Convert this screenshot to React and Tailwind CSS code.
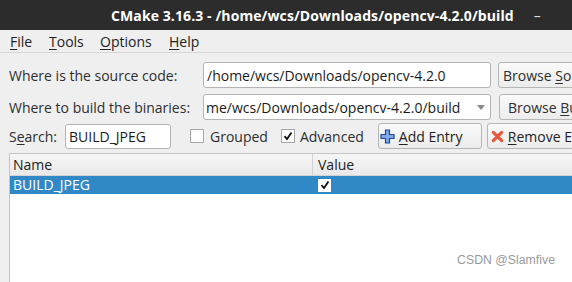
import React from "react";

function Checkbox({ checked }) {
  return (
    <span className="inline-flex h-[14px] w-[14px] items-center justify-center border border-[#a8a8a8] bg-white">
      {checked && (
        <svg width="10" height="10" viewBox="0 0 10 10">
          <path d="M1.5 5.2 L4 8 L8.5 1.5" fill="none" stroke="#111" strokeWidth="1.8" />
        </svg>
      )}
    </span>
  );
}

function PlusIcon() {
  return (
    <svg width="15" height="15" viewBox="0 0 15 15">
      <path
        d="M5.5 1 H9.5 V5.5 H14 V9.5 H9.5 V14 H5.5 V9.5 H1 V5.5 H5.5 Z"
        fill="#7fa9e8"
        stroke="#23479a"
        strokeWidth="1.2"
      />
    </svg>
  );
}

function RemoveIcon() {
  return (
    <svg width="13" height="13" viewBox="0 0 14 14">
      <path d="M2.5 2.5 L11.5 11.5 M11.5 2.5 L2.5 11.5" stroke="#e9573d" strokeWidth="3.4" strokeLinecap="round" />
    </svg>
  );
}

function Button({ children, className = "" }) {
  return (
    <div
      className={`flex h-[26px] shrink-0 items-center gap-[4px] rounded-[3px] border border-[#b5b5b5] bg-gradient-to-b from-[#fafafa] to-[#ececec] ${className}`}
    >
      {children}
    </div>
  );
}

function U({ children }) {
  return <span className="underline underline-offset-2">{children}</span>;
}

export default function App() {
  return (
    <div
      className="h-[282px] w-[572px] overflow-hidden bg-[#efefef] text-[14px] text-[#2e2e2e]"
      style={{ fontFamily: '"Open Sans", "Noto Sans", sans-serif' }}
    >
      {/* title bar */}
      <div className="flex h-[30px] items-center bg-[#2c2c2c] text-white">
        <div className="w-[111px] shrink-0" />
        <div className="whitespace-nowrap text-[14px] font-bold tracking-[0.1px]">
          CMake 3.16.3 - /home/wcs/Downloads/opencv-4.2.0/build
        </div>
        <div className="ml-[20px] text-[#dcdcdc]">–</div>
      </div>

      {/* menu bar */}
      <div className="flex h-[23px] items-center border-b border-[#d6d6d6] pl-[10px] text-[#222]">
        <span className="w-[39px]"><U>F</U>ile</span>
        <span className="w-[51px]"><U>T</U>ools</span>
        <span className="w-[69px]"><U>O</U>ptions</span>
        <span><U>H</U>elp</span>
      </div>

      <div className="flex flex-col gap-[6px] pl-[9px] pt-[9px]">
        {/* source */}
        <div className="flex h-[26px] items-center">
          <div className="w-[194px] shrink-0 whitespace-nowrap">Where is the source code:</div>
          <div className="flex h-[26px] w-[288px] shrink-0 items-center rounded-[3px] border border-[#b4b4b4] bg-white pl-[3px] text-[#1a1a1a]">
            /home/wcs/Downloads/opencv-4.2.0
          </div>
          <Button className="ml-[7px] w-[100px] whitespace-nowrap pl-[4px]">
            <span>Browse <U>S</U>ource...</span>
          </Button>
        </div>

        {/* build */}
        <div className="flex h-[26px] items-center">
          <div className="w-[194px] shrink-0 whitespace-nowrap">Where to build the binaries:</div>
          <div className="flex h-[26px] w-[288px] shrink-0 items-center overflow-hidden rounded-[3px] border border-[#b4b4b4] bg-white text-[#1a1a1a]">
            <div className="flex-1 overflow-hidden whitespace-nowrap pl-[2px]">me/wcs/Downloads/opencv-4.2.0/build</div>
            <div className="flex w-[18px] shrink-0 justify-center">
              <svg width="8" height="5" viewBox="0 0 8 5">
                <path d="M0 0 H8 L4 5 Z" fill="#8a8a8a" />
              </svg>
            </div>
          </div>
          <Button className="ml-[8px] w-[100px] whitespace-nowrap pl-[8px]">
            <span>Browse <U>B</U>uild...</span>
          </Button>
        </div>

        {/* search */}
        <div className="-mt-[3px] flex h-[26px] items-center">
          <div className="w-[56px] shrink-0">S<U>e</U>arch:</div>
          <div className="flex h-[25px] w-[106px] shrink-0 items-center rounded-[3px] border border-[#b4b4b4] bg-white pl-[3px] text-[#1a1a1a]">
            BUILD_JPEG
          </div>
          <div className="ml-[19px] flex items-center gap-[6px]">
            <Checkbox />
            <span>Grouped</span>
          </div>
          <div className="ml-[13px] flex items-center gap-[5px]">
            <Checkbox checked />
            <span>Advanced</span>
          </div>
          <Button className="ml-[14px] w-[104px] pl-[1px]">
            <PlusIcon />
            <span className="text-[#222]"><U>A</U>dd Entry</span>
          </Button>
          <Button className="ml-[5px] w-[120px] pl-[3px]">
            <RemoveIcon />
            <span className="whitespace-nowrap text-[#222]"><U>R</U>emove Entry</span>
          </Button>
        </div>
      </div>

      {/* table */}
      <div className="ml-[9px] mt-[4px] h-[200px] border-l border-t border-[#c4c4c4] bg-white">
        <div className="flex h-[22px] items-center border-b border-[#d4d4d4] bg-gradient-to-b from-[#f6f6f6] to-[#e9e9e9] text-[#222]">
          <div className="flex h-full w-[303px] items-center border-r border-[#d2d2d2] pl-[3px]">Name</div>
          <div className="pl-[5px]">Value</div>
        </div>
        <div className="flex h-[18px] items-center bg-[#3089c6] text-white">
          <div className="w-[304px] pl-[3px] leading-none">BUILD_JPEG</div>
          <div className="pl-[4px]">
            <span className="flex h-[13px] w-[13px] items-center justify-center bg-white">
              <svg width="10" height="10" viewBox="0 0 10 10">
                <path d="M1.5 5.2 L4 8 L8.5 1.5" fill="none" stroke="#111" strokeWidth="1.8" />
              </svg>
            </span>
          </div>
        </div>
        <div className="flex justify-end pr-[17px] pt-[57px]">
          <span
            className="text-[12.3px] text-[#9a9a9a]"
            style={{ fontFamily: '"Liberation Sans", Arial, sans-serif' }}
          >
            CSDN @Slamfive
          </span>
        </div>
      </div>
    </div>
  );
}
